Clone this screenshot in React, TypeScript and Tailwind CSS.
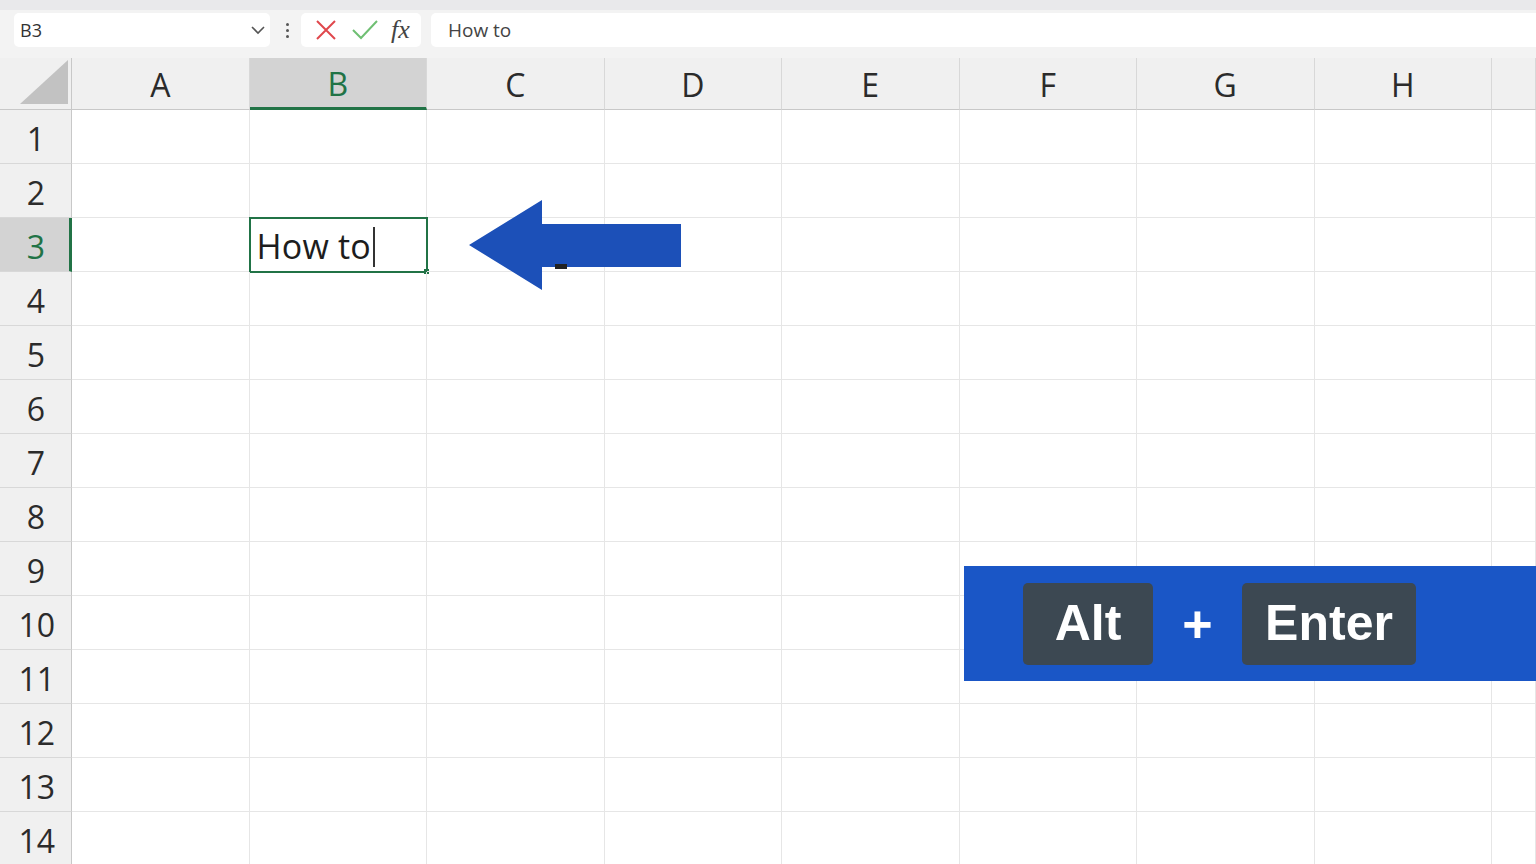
import React from 'react';

const cols = ['A', 'B', 'C', 'D', 'E', 'F', 'G', 'H', ''];
const rows = Array.from({ length: 14 }, (_, i) => i + 1);

const font = { fontFamily: '"Open Sans", "Noto Sans", sans-serif' };

export default function App() {
  return (
    <div className="relative w-[1536px] h-[864px] overflow-hidden bg-[#f3f3f3]" style={font}>
      {/* top strip */}
      <div className="h-[10px] bg-[#e9e9eb]" />

      {/* formula bar */}
      <div className="flex items-center h-[38px] mt-[1px] pl-[14px]">
        <div className="flex items-center justify-between w-[256px] h-[34px] bg-white rounded-[5px] pl-[6px] pr-[2px]">
          <span className="text-[18px] text-[#333]">B3</span>
          <svg width="20" height="20" viewBox="0 0 20 20" fill="none" stroke="#555" strokeWidth="1.6">
            <path d="M4 7l6 6 6-6" />
          </svg>
        </div>
        <div className="flex flex-col gap-[3px] ml-[16px]">
          <span className="w-[3px] h-[3px] rounded-full bg-[#555]" />
          <span className="w-[3px] h-[3px] rounded-full bg-[#555]" />
          <span className="w-[3px] h-[3px] rounded-full bg-[#555]" />
        </div>
        <div className="flex items-center gap-[12px] w-[120px] h-[34px] bg-white rounded-[5px] pl-[12px] ml-[12px]">
          <svg width="26" height="26" viewBox="0 0 26 26" stroke="#e0474c" strokeWidth="2">
            <path d="M4 4l18 18M22 4L4 22" />
          </svg>
          <svg width="28" height="24" viewBox="0 0 28 24" fill="none" stroke="#6fbf73" strokeWidth="2">
            <path d="M2 12l8 8L26 3" />
          </svg>
          <span className="text-[26px] italic text-[#444] leading-none" style={{ fontFamily: '"Liberation Serif", serif' }}>
            fx
          </span>
        </div>
        <div className="flex-1 h-[34px] bg-white rounded-l-[5px] flex items-center pl-[17px] ml-[10px]">
          <span className="text-[19px] text-[#444]">How to</span>
        </div>
      </div>

      {/* sheet */}
      <div className="mt-[9px] grid grid-cols-[72px_repeat(8,177.5px)_1fr] grid-rows-[52px_repeat(14,54px)] bg-white">
        {/* corner */}
        <div className="bg-[#f0f0f0] border-b border-r border-[#c8c8c8] flex items-end justify-end pb-[5px] pr-[3px]">
          <svg width="48" height="44" viewBox="0 0 48 44">
            <polygon points="48,0 48,44 0,44" fill="#c2c2c2" />
          </svg>
        </div>
        {cols.map((c, i) => (
          <div
            key={'h' + i}
            className={
              c === 'B'
                ? 'bg-[#d3d3d3] border-b-[3px] border-b-[#217346] border-r border-r-[#d8d8d8] flex items-center justify-center pt-[2px] text-[32px] text-[#217346]'
                : 'bg-[#f0f0f0] border-b border-b-[#c8c8c8] border-r border-r-[#d8d8d8] flex items-center justify-center pt-[2px] text-[32px] text-[#2b2b2b]'
            }
          >
            {c}
          </div>
        ))}
        {rows.map((r) => (
          <React.Fragment key={r}>
            <div
              className={
                r === 3
                  ? 'bg-[#d3d3d3] border-r-[3px] border-r-[#217346] border-b border-b-[#d8d8d8] flex items-center justify-end pt-[5px] pr-[24px] text-[32px] text-[#217346]'
                  : 'bg-[#f0f0f0] border-r border-r-[#c8c8c8] border-b border-b-[#d8d8d8] flex items-center justify-end pt-[5px] pr-[26px] text-[32px] text-[#2b2b2b]'
              }
            >
              <span className={r >= 10 ? 'mr-[-10px]' : ''}>{r}</span>
            </div>
            {cols.map((c, i) => (
              <div key={r + '-' + i} className="border-r border-b border-[#e6e6e6] relative">
                {r === 3 && c === 'B' && (
                  <div className="absolute -left-[1px] -top-[1px] w-[179px] h-[56px] border-2 border-[#217346] flex items-center pl-[6px] pt-[3px]">
                    <span className="text-[34px] text-[#1d1d1d] tracking-[0.2px]">How to</span>
                    <span className="ml-[2px] w-[2px] h-[40px] bg-[#333]" />
                    <span className="absolute right-[-3px] bottom-[-3px] w-[5px] h-[5px] bg-[#217346]" />
                  </div>
                )}
              </div>
            ))}
          </React.Fragment>
        ))}
      </div>

      {/* arrow overlay */}
      <svg className="absolute left-[466px] top-[197px]" width="218" height="96" viewBox="0 0 218 96">
        <polygon points="3,48 76,3 76,27 215,27 215,70 76,70 76,93" fill="#1c50b8" />
      </svg>
      <div className="absolute left-[555px] top-[264px] w-[12px] h-[5px] bg-[#222]" />

      {/* shortcut banner */}
      <div className="absolute left-[964px] top-[566px] w-[572px] h-[115px] bg-[#1a56c6] flex items-center pl-[59px]">
        <div className="w-[130px] h-[82px] bg-[#3c4852] rounded-[5px] flex items-center justify-center">
          <span className="text-white text-[50px] font-semibold" style={{ fontFamily: '"Liberation Sans", Arial, sans-serif' }}>
            Alt
          </span>
        </div>
        <span className="w-[89px] text-center text-white text-[52px] font-semibold" style={{ fontFamily: '"Liberation Sans", Arial, sans-serif' }}>
          +
        </span>
        <div className="w-[174px] h-[82px] bg-[#3c4852] rounded-[5px] flex items-center justify-center">
          <span className="text-white text-[50px] font-semibold" style={{ fontFamily: '"Liberation Sans", Arial, sans-serif' }}>
            Enter
          </span>
        </div>
      </div>
    </div>
  );
}
